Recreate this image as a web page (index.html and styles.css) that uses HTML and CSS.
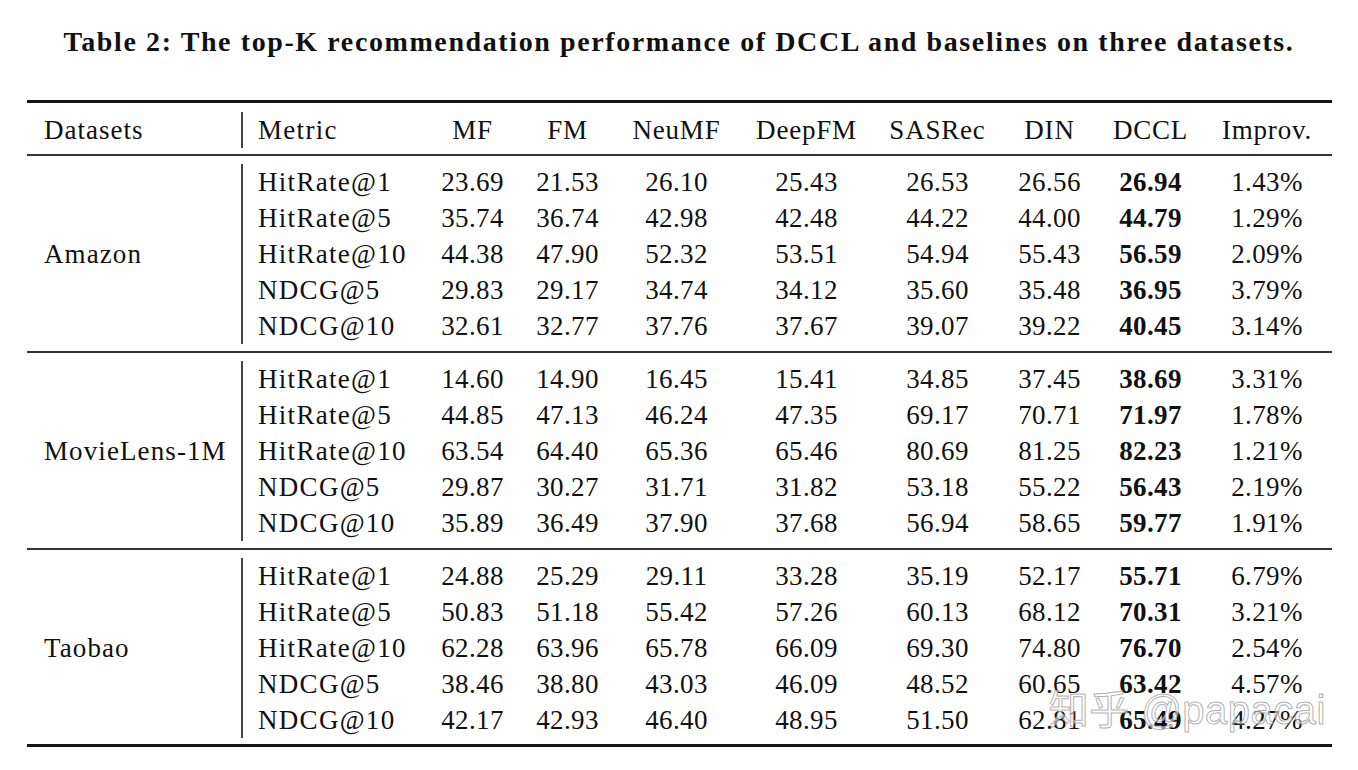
FILE: index.html
```html
<!DOCTYPE html>
<html lang="en">
<head>
<meta charset="utf-8">
<title>Table 2</title>
<link rel="stylesheet" href="styles.css">
</head>
<body>
<div class="page">
  <h1 class="caption">Table 2: The top-K recommendation performance of DCCL and baselines on three datasets.</h1>
  <div class="table">
    <div class="rule thick"></div>
    <div class="head">
      <div class="ds-head">Datasets</div>
      <div class="row">
        <div class="metric">Metric</div><div>MF</div><div>FM</div><div>NeuMF</div><div>DeepFM</div><div>SASRec</div><div>DIN</div><div>DCCL</div><div>Improv.</div>
      </div>
    </div>
    <div class="rule"></div>
    <div class="group">
      <div class="ds">Amazon</div>
      <div class="rows">
        <div class="row"><div class="metric">HitRate@1</div><div>23.69</div><div>21.53</div><div>26.10</div><div>25.43</div><div>26.53</div><div>26.56</div><div class="best">26.94</div><div>1.43%</div></div>
        <div class="row"><div class="metric">HitRate@5</div><div>35.74</div><div>36.74</div><div>42.98</div><div>42.48</div><div>44.22</div><div>44.00</div><div class="best">44.79</div><div>1.29%</div></div>
        <div class="row"><div class="metric">HitRate@10</div><div>44.38</div><div>47.90</div><div>52.32</div><div>53.51</div><div>54.94</div><div>55.43</div><div class="best">56.59</div><div>2.09%</div></div>
        <div class="row"><div class="metric">NDCG@5</div><div>29.83</div><div>29.17</div><div>34.74</div><div>34.12</div><div>35.60</div><div>35.48</div><div class="best">36.95</div><div>3.79%</div></div>
        <div class="row"><div class="metric">NDCG@10</div><div>32.61</div><div>32.77</div><div>37.76</div><div>37.67</div><div>39.07</div><div>39.22</div><div class="best">40.45</div><div>3.14%</div></div>
      </div>
    </div>
    <div class="rule"></div>
    <div class="group">
      <div class="ds">MovieLens-1M</div>
      <div class="rows">
        <div class="row"><div class="metric">HitRate@1</div><div>14.60</div><div>14.90</div><div>16.45</div><div>15.41</div><div>34.85</div><div>37.45</div><div class="best">38.69</div><div>3.31%</div></div>
        <div class="row"><div class="metric">HitRate@5</div><div>44.85</div><div>47.13</div><div>46.24</div><div>47.35</div><div>69.17</div><div>70.71</div><div class="best">71.97</div><div>1.78%</div></div>
        <div class="row"><div class="metric">HitRate@10</div><div>63.54</div><div>64.40</div><div>65.36</div><div>65.46</div><div>80.69</div><div>81.25</div><div class="best">82.23</div><div>1.21%</div></div>
        <div class="row"><div class="metric">NDCG@5</div><div>29.87</div><div>30.27</div><div>31.71</div><div>31.82</div><div>53.18</div><div>55.22</div><div class="best">56.43</div><div>2.19%</div></div>
        <div class="row"><div class="metric">NDCG@10</div><div>35.89</div><div>36.49</div><div>37.90</div><div>37.68</div><div>56.94</div><div>58.65</div><div class="best">59.77</div><div>1.91%</div></div>
      </div>
    </div>
    <div class="rule"></div>
    <div class="group last">
      <div class="ds">Taobao</div>
      <div class="rows">
        <div class="row"><div class="metric">HitRate@1</div><div>24.88</div><div>25.29</div><div>29.11</div><div>33.28</div><div>35.19</div><div>52.17</div><div class="best">55.71</div><div>6.79%</div></div>
        <div class="row"><div class="metric">HitRate@5</div><div>50.83</div><div>51.18</div><div>55.42</div><div>57.26</div><div>60.13</div><div>68.12</div><div class="best">70.31</div><div>3.21%</div></div>
        <div class="row"><div class="metric">HitRate@10</div><div>62.28</div><div>63.96</div><div>65.78</div><div>66.09</div><div>69.30</div><div>74.80</div><div class="best">76.70</div><div>2.54%</div></div>
        <div class="row"><div class="metric">NDCG@5</div><div>38.46</div><div>38.80</div><div>43.03</div><div>46.09</div><div>48.52</div><div>60.65</div><div class="best">63.42</div><div>4.57%</div></div>
        <div class="row"><div class="metric">NDCG@10</div><div>42.17</div><div>42.93</div><div>46.40</div><div>48.95</div><div>51.50</div><div>62.81</div><div class="best">65.49</div><div>4.27%</div></div>
      </div>
    </div>
    <div class="rule thick"></div>
    <div class="watermark">知乎 @papacai</div>
  </div>
</div>
</body>
</html>
```
FILE: styles.css
```css
html, body {
  margin: 0;
  padding: 0;
  background: #fff;
}

.page {
  width: 1358px;
  height: 770px;
  font-family: "Liberation Serif", "Times New Roman", serif;
  color: #111;
}

.caption {
  margin: 0;
  padding-top: 24px;
  height: 36px;
  line-height: 36px;
  font-size: 28px;
  font-weight: bold;
  text-align: center;
  letter-spacing: 1.6px;
}

.table {
  position: relative;
  margin: 40px 0 0 27px;
  width: 1305px;
  font-size: 27px;
  line-height: 36px;
  letter-spacing: 0.4px;
}

.rule {
  height: 2px;
  background: #333;
}

.rule.thick {
  height: 3px;
  background: #151515;
}

.head {
  display: flex;
  padding: 9px 0 6px;
}

.ds-head {
  width: 199px;
  padding-left: 17px;
  letter-spacing: 1px;
}

.group {
  display: flex;
  padding: 8px 0 7px;
}

.group.last {
  padding-bottom: 6px;
}

.ds {
  width: 199px;
  padding-left: 17px;
  display: flex;
  align-items: center;
  letter-spacing: 1.1px;
}

.row {
  display: grid;
  grid-template-columns: 182px 95px 95px 123px 137px 125px 99px 103px 130px;
  height: 36px;
  text-align: center;
  white-space: nowrap;
}

.head .row {
  letter-spacing: 0.8px;
}

.head .row,
.rows {
  border-left: 2px solid #444;
}

.row .metric {
  text-align: left;
  padding-left: 15px;
  letter-spacing: 1.3px;
}

.best {
  font-weight: bold;
}

.watermark {
  position: absolute;
  right: 6px;
  bottom: 17px;
  font-family: "Liberation Sans", "Noto Sans CJK SC", sans-serif;
  font-size: 40px;
  line-height: 40px;
  color: rgba(255, 255, 255, 0.55);
  -webkit-text-stroke: 1px rgba(150, 150, 150, 0.75);
  letter-spacing: 0.5px;
}
```
